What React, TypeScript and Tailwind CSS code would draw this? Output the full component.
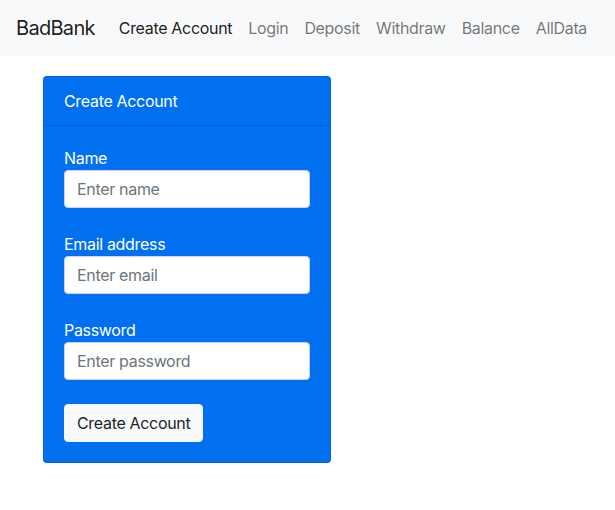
import React from "react";

const links = ["Create Account", "Login", "Deposit", "Withdraw", "Balance", "AllData"];

function Field({ label, placeholder, type }: { label: string; placeholder: string; type: string }) {
  return (
    <>
      <div className="leading-6">{label}</div>
      <input
        type={type}
        placeholder={placeholder}
        className="block w-full h-[38px] px-3 rounded-[4px] border border-[#ced4da] bg-white text-[#495057] text-base tracking-[-0.02em] placeholder:text-[#6c757d] outline-none"
      />
      <div className="h-6" />
    </>
  );
}

export default function App() {
  return (
    <div
      className="min-h-[510px] bg-white text-[#212529] text-base tracking-[-0.02em]"
      style={{ fontFamily: "Inter, 'Noto Sans', sans-serif" }}
    >
      {/* Navbar */}
      <nav className="h-14 bg-[#f8f9fa] flex items-center px-4 whitespace-nowrap">
        <span className="text-xl text-black/90 mr-4 py-[5px] leading-[30px] tracking-[-0.035em]">BadBank</span>
        <div className="flex items-center">
          {links.map((l, i) => (
            <a
              key={l}
              className={`px-2 leading-6 ${i === 0 ? "text-black/90" : "text-black/55"}`}
            >
              {l}
            </a>
          ))}
        </div>
      </nav>

      {/* Card */}
      <div className="ml-[43px] mt-5 w-72 rounded-[4px] border border-black/10 bg-[#0070f0] text-white">
        <div className="px-5 py-3 leading-6 border-b border-black/15">Create Account</div>
        <div className="p-5">
          <Field label="Name" placeholder="Enter name" type="input" />
          <Field label="Email address" placeholder="Enter email" type="input" />
          <Field label="Password" placeholder="Enter password" type="password" />
          <button className="h-[38px] px-3 rounded-[4px] bg-[#f8f9fa] text-[#212529] border border-[#f8f9fa] tracking-[-0.02em]">
            Create Account
          </button>
        </div>
      </div>
    </div>
  );
}
